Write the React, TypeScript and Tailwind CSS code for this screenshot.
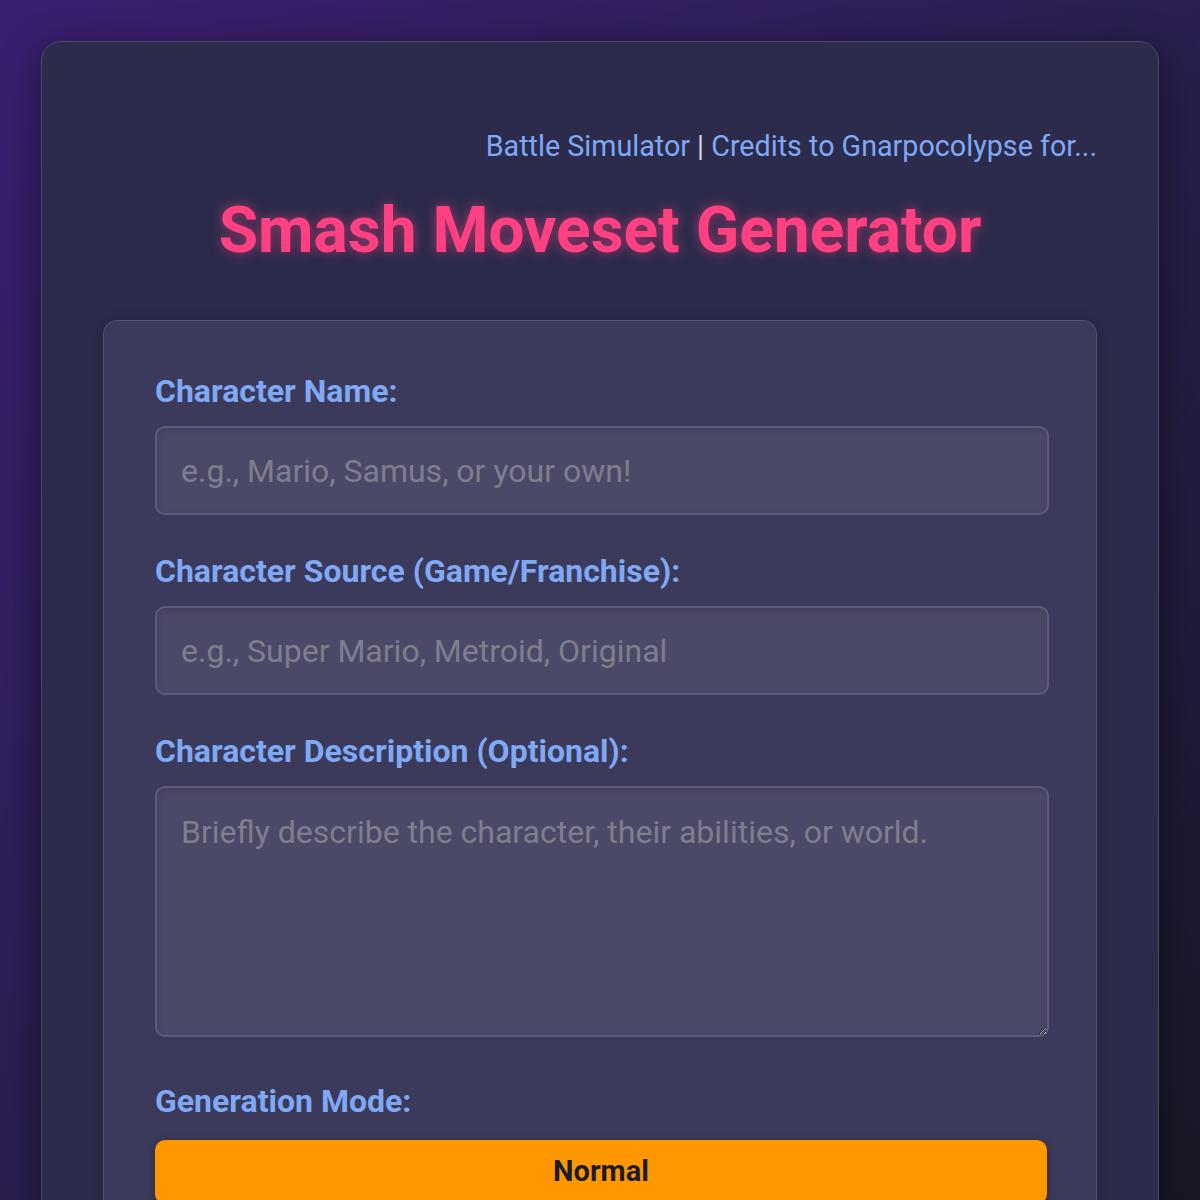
import React from 'react';

const labelCls = "block text-[32px] font-bold text-[#7fa9f5] leading-none";
const fieldCls =
  "w-[894px] rounded-[10px] border-2 border-[#5d5b7c] bg-[#4b4968] px-[24px] text-[32px] text-[#d8d8e6] placeholder:text-[#7f7e8d] outline-none shadow-[inset_0_2px_6px_rgba(0,0,0,0.15)]";

const App: React.FC = () => {
  return (
    <div
      className="min-h-screen w-full bg-[linear-gradient(135deg,#3b1f72_0%,#2a1f50_45%,#17161f_100%)] px-[41px] pt-[41px] pb-[60px]"
      style={{ fontFamily: 'Roboto, "Noto Sans", sans-serif' }}
    >
      <div className="w-[1118px] rounded-[20px] border border-[#4a4868] bg-[#2c2b4b] pl-[61px] pr-[61px] pt-[87px] pb-[60px] shadow-[0_10px_40px_rgba(0,0,0,0.45)]">
        {/* top links */}
        <div className="text-right text-[28.7px] leading-[1.2] text-[#7fa9f5]">
          <span>Battle Simulator</span>
          <span className="text-[#d6d6e4]"> | </span>
          <span>Credits to Gnarpocolypse for...</span>
        </div>

        <h1 className="mt-[30px] text-center text-[64px] font-bold leading-[1.2] text-[#ff4081] [text-shadow:0_0_12px_rgba(255,64,129,0.55)]">
          Smash Moveset Generator
        </h1>

        {/* form panel */}
        <div className="mt-[50px] rounded-[14px] border border-[#55536f] bg-[#3c3a5a] px-[51px] pt-[54px] pb-[60px] shadow-[0_4px_16px_rgba(0,0,0,0.25)]">
          <label className={labelCls}>Character Name:</label>
          <input
            type="text"
            placeholder="e.g., Mario, Samus, or your own!"
            className={`${fieldCls} mt-[19px] h-[89px]`}
          />

          <label className={`${labelCls} mt-[40px]`}>Character Source (Game/Franchise):</label>
          <input
            type="text"
            placeholder="e.g., Super Mario, Metroid, Original"
            className={`${fieldCls} mt-[19px] h-[89px]`}
          />

          <label className={`${labelCls} mt-[40px]`}>Character Description (Optional):</label>
          <textarea
            placeholder="Briefly describe the character, their abilities, or world."
            className={`${fieldCls} mt-[19px] block h-[251px] resize-y py-[25px] leading-[1.2]`}
          />

          <label className={`${labelCls} mt-[48px]`}>Generation Mode:</label>
          <button className="mt-[23px] h-[64px] w-[892px] rounded-[10px] bg-[#ff9800] text-[29px] font-bold text-[#1c1b2a] shadow-[0_2px_8px_rgba(0,0,0,0.3)]">
            Normal
          </button>
        </div>
      </div>
    </div>
  );
};

export default App;
